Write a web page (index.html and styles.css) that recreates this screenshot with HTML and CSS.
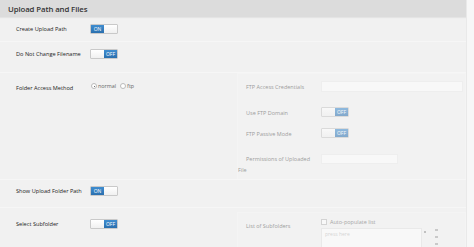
FILE: index.html
```html
<!DOCTYPE html>
<html>
<head>
<meta charset="utf-8">
<link rel="stylesheet" href="styles.css">
</head>
<body>
<div class="page">
  <div class="panel">
    <div class="header">Upload Path and Files</div>

    <div class="row row1">
      <div class="label">Create Upload Path</div>
      <div class="toggle on"><span class="half blue">ON</span><span class="half white"></span></div>
    </div>

    <div class="row row2">
      <div class="label">Do Not Change Filename</div>
      <div class="toggle off"><span class="half white"></span><span class="half blue">OFF</span></div>
    </div>

    <div class="row row3">
      <div class="left">
        <div class="label">Folder Access Method</div>
        <div class="radios">
          <span class="radio checked"></span><span class="rtext">normal</span>
          <span class="radio"></span><span class="rtext">ftp</span>
        </div>
      </div>
      <div class="subpanel ftp">
        <div class="sub-row s1">
          <div class="sub-label">FTP Access Credentials</div>
          <div class="input wide"></div>
        </div>
        <div class="sub-row s2">
          <div class="sub-label">Use FTP Domain</div>
          <div class="toggle off"><span class="half white"></span><span class="half blue">OFF</span></div>
        </div>
        <div class="sub-row s3">
          <div class="sub-label">FTP Passive Mode</div>
          <div class="toggle off"><span class="half white"></span><span class="half blue">OFF</span></div>
        </div>
        <div class="sub-row s4">
          <div class="sub-label perm">Permissions of Uploaded<br>File</div>
          <div class="input short"></div>
        </div>
      </div>
    </div>

    <div class="row row4">
      <div class="label">Show Upload Folder Path</div>
      <div class="toggle on"><span class="half blue">ON</span><span class="half white"></span></div>
    </div>

    <div class="row row5">
      <div class="left">
        <div class="label">Select Subfolder</div>
        <div class="toggle off"><span class="half white"></span><span class="half blue">OFF</span></div>
      </div>
      <div class="subpanel subs">
        <div class="sub-label">List of Subfolders</div>
        <div class="subs-ctrl">
          <div class="check-line"><span class="check"></span><span class="ctext">Auto-populate list</span></div>
          <div class="select-line">
            <div class="select">press here</div>
            <span class="caret"></span>
            <span class="btns"><i></i><i></i><i></i></span>
          </div>
        </div>
      </div>
    </div>
  </div>
  <div class="strip"></div>
</div>
</body>
</html>
```

FILE: styles.css
```css
* { box-sizing: border-box; }
html, body { margin: 0; padding: 0; }
body {
  background: #f5f5f5;
  font-family: "Open Sans", "Noto Sans", sans-serif;
  color: #333;
  width: 474px;
  height: 247px;
  overflow: hidden;
}
.page { display: flex; height: 247px; }
.panel {
  width: 466px;
  background: #f1f1f1;
  display: flex;
  flex-direction: column;
}
.strip {
  width: 8px;
  background: #f7f7f7;
  border-left: 1px solid #e9e9e9;
}
.header {
  height: 17px;
  flex: none;
  background: #dcdcdc;
  padding-left: 8px;
  display: flex;
  align-items: center;
  font-size: 7.8px;
  font-weight: 600;
  color: #333;
  letter-spacing: -0.1px;
  box-shadow: 0 1px 1px rgba(0,0,0,0.05);
}
.row {
  display: flex;
  flex: none;
  border-bottom: 1px solid #f6f6f6;
}
.label {
  width: 90px;
  padding-left: 16px;
  font-size: 5.6px;
  color: #222;
  line-height: 10px;
  white-space: nowrap;
}
.row1 { height: 25px; padding-top: 7px; }
.row2 { height: 31px; padding-top: 7px; }
.row3 { height: 107px; }
.row4 { height: 28px; padding-top: 6px; }
.row5 { flex: 1; }

.toggle {
  width: 28px;
  height: 10px;
  display: flex;
  border: 1px solid #c9c9c9;
  border-radius: 1px;
  background: #fff;
}
.half {
  flex: 1;
  display: flex;
  align-items: center;
  justify-content: center;
  font-size: 5px;
  color: #fff;
  line-height: 1;
}
.half.blue {
  background: linear-gradient(#3f8dd0, #2a6fae);
}
.half.white { background: linear-gradient(#ffffff, #f0f0f0); }

.row3 .left { width: 237px; display: flex; padding-top: 9px; }
.row3 .left .label { line-height: 10px; padding-top: 1px; }
.radios {
  display: flex;
  align-items: center;
  height: 6px;
  margin-top: 1px;
  font-size: 5.4px;
  color: #666;
}
.radio {
  width: 6px; height: 6px;
  border: 1px solid #bbb;
  border-radius: 50%;
  background: #fff;
  margin-left: 1px;
  position: relative;
}
.radio.checked::after {
  content: "";
  position: absolute;
  left: 1.5px; top: 1.5px;
  width: 1.8px; height: 1.8px;
  border-radius: 50%;
  background: #444;
}
.rtext { margin: 0 3px 0 1px; }

.subpanel {
  width: 229px;
  background: #f3f3f3;
  border: 1px solid #f7f7f7;
  opacity: 0.55;
}
.ftp { height: 107px; padding-top: 7px; }
.sub-row {
  display: flex;
  padding-left: 8px;
}
.sub-label {
  width: 75px;
  font-size: 5.5px;
  color: #555;
  line-height: 8px;
  white-space: nowrap;
}
.s1 { height: 26px; align-items: flex-start; }
.s1 .sub-label { padding-top: 2px; }
.s2 { height: 21px; }
.s3 { height: 21px; }
.s2 .sub-label, .s3 .sub-label { padding-top: 2px; }
.s4 { padding-top: 5px; }
.s4 .sub-label.perm {
  margin-left: -8px;
  text-indent: 8px;
  width: 83px;
  line-height: 11px;
  padding-top: 0;
}
.input {
  height: 11px;
  background: #fff;
  border: 1px solid #ececec;
}
.input.wide { width: 142px; }
.input.short { width: 77px; height: 10px; }

.row5 .left { width: 237px; display: flex; padding-top: 11px; }
.subs {
  display: flex;
  margin-top: 4px;
  padding-left: 8px;
  border-bottom: none;
}
.subs .sub-label { padding-top: 9px; }
.subs-ctrl { display: flex; flex-direction: column; padding-top: 5px; }
.check-line { display: flex; align-items: center; height: 8px; font-size: 5.5px; color: #666; }
.check { width: 6px; height: 6px; border: 1px solid #bbb; background: #fff; margin-right: 3px; }
.select-line { display: flex; margin-top: 2px; }
.select {
  width: 101px;
  height: 22px;
  background: #fff;
  border: 1px solid #e4e4e4;
  font-size: 5px;
  color: #bbb;
  padding: 2px 3px;
}
.caret {
  width: 2px; height: 2px; background: #999; margin: 3px 0 0 2px;
}
.btns { display: flex; flex-direction: column; margin-left: 9px; gap: 5px; padding-top: 1px; }
.btns i { display: block; width: 3px; height: 2px; background: #aaa; }
```
